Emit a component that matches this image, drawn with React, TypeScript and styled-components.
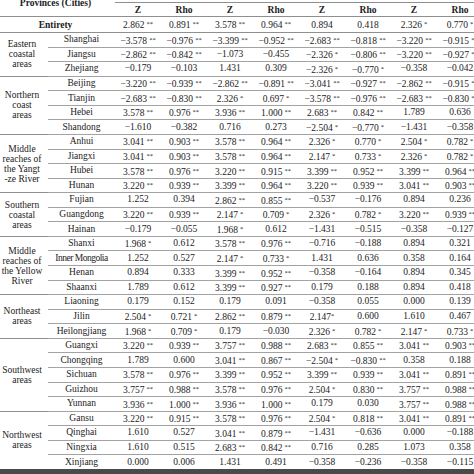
import React from "react";
import styled, { createGlobalStyle } from "styled-components";

const GlobalStyle = createGlobalStyle`
  html, body {
    margin: 0;
    padding: 0;
    background: #fff;
    overflow: hidden;
  }
  body {
    width: 474px;
    height: 474px;
  }
`;

const Page = styled.div`
  width: 474px;
  height: 474px;
  overflow: hidden;
  background: #fff;
`;

const Table = styled.table`
  border-collapse: collapse;
  table-layout: fixed;
  width: 487px;
  margin-left: -4px;
  margin-top: -11px;
  font-family: "Liberation Serif", "Times New Roman", serif;
  font-size: 9.5px;
  color: #222;
`;

const GroupHead = styled.th`
  height: 13px;
  padding: 0;
  border-bottom: 1px solid #8f8f8f;
`;

const CornerHead = styled.th`
  padding: 0;
  font-weight: 700;
  text-align: center;
  vertical-align: middle;
  border-bottom: 1px solid #8f8f8f;
`;

const ColHead = styled.th`
  height: 13px;
  padding: 0;
  font-weight: 700;
  text-align: center;
  border-bottom: 1px solid #8f8f8f;
`;

const Cell = styled.td<{ $last?: boolean }>`
  height: 13.57px;
  padding: 0;
  line-height: 11px;
  text-align: center;
  white-space: nowrap;
  border-bottom: ${(p) => (p.$last ? "6px solid #4a4a4a" : "1px solid #a3a3a3")};
`;

const TotalCell = styled.td<{ $label?: boolean }>`
  height: 15px;
  padding: 0;
  font-weight: ${(p) => (p.$label ? 700 : 400)};
  text-align: center;
  white-space: nowrap;
  border-bottom: 1px solid #8f8f8f;
`;

const Region = styled.td<{ $last?: boolean }>`
  padding: 0;
  line-height: 10px;
  text-align: center;
  vertical-align: middle;
  white-space: nowrap;
  border-bottom: ${(p) => (p.$last ? "6px solid #4a4a4a" : "1px solid #8f8f8f")};
`;

const Province = styled(Cell)<{ $condensed?: boolean }>`
  letter-spacing: ${(p) => (p.$condensed ? "-0.5px" : "0")};
`;

const Stars = styled.span<{ $tight?: boolean }>`
  font-size: 6.5px;
  vertical-align: 1.5px;
  margin-left: ${(p) => (p.$tight ? "0" : "2px")};
`;

type Group = { name: string[]; rows: [string, string[]][] };

const entirety = ["2.862 **", "0.891 **", "3.578 **", "0.964 **", "0.894", "0.418", "2.326 *", "0.770 *"];

const groups: Group[] = [
  {
    name: ["Eastern", "coastal", "areas"],
    rows: [
      ["Shanghai", ["−3.578 **", "−0.976 **", "−3.399 **", "−0.952 **", "−2.683 **", "−0.818 **", "−3.220 **", "−0.915 **"]],
      ["Jiangsu", ["−2.862 **", "−0.842 **", "−1.073", "−0.455", "−2.326 *", "−0.806 **", "−3.220 **", "−0.927 **"]],
      ["Zhejiang", ["−0.179", "−0.103", "1.431", "0.309", "−2.326 *", "−0.770 *", "−0.358", "−0.042"]],
    ],
  },
  {
    name: ["Northern", "coast", "areas"],
    rows: [
      ["Beijing", ["−3.220 **", "−0.939 **", "−2.862 **", "−0.891 **", "−3.041 **", "−0.927 **", "−2.862 **", "−0.915 **"]],
      ["Tianjin", ["−2.683 **", "−0.830 **", "2.326 *", "0.697 *", "−3.578 **", "−0.976 **", "−2.683 **", "−0.830 **"]],
      ["Hebei", ["3.578 **", "0.976 **", "3.936 **", "1.000 **", "2.683 **", "0.842 **", "1.789", "0.636"]],
      ["Shandong", ["−1.610", "−0.382", "0.716", "0.273", "−2.504 *", "−0.770 *", "−1.431", "−0.358"]],
    ],
  },
  {
    name: ["Middle", "reaches of", "the Yangt", "-ze River"],
    rows: [
      ["Anhui", ["3.041 **", "0.903 **", "3.578 **", "0.964 **", "2.326 *", "0.770 *", "2.504 *", "0.782 *"]],
      ["Jiangxi", ["3.041 **", "0.903 **", "3.578 **", "0.964 **", "2.147 *", "0.733 *", "2.326 *", "0.782 *"]],
      ["Hubei", ["3.578 **", "0.976 **", "3.220 **", "0.915 **", "3.399 **", "0.952 **", "3.399 **", "0.964 **"]],
      ["Hunan", ["3.220 **", "0.939 **", "3.399 **", "0.964 **", "3.220 **", "0.939 **", "3.041 **", "0.903 **"]],
    ],
  },
  {
    name: ["Southern", "coastal", "areas"],
    rows: [
      ["Fujian", ["1.252", "0.394", "2.862 **", "0.855 **", "−0.537", "−0.176", "0.894", "0.236"]],
      ["Guangdong", ["3.220 **", "0.939 **", "2.147 *", "0.709 *", "2.326 *", "0.782 *", "3.220 **", "0.939 **"]],
      ["Hainan", ["−0.179", "−0.055", "1.968 *", "0.612", "−1.431", "−0.515", "−0.358", "−0.127"]],
    ],
  },
  {
    name: ["Middle", "reaches of", "the Yellow", "River"],
    rows: [
      ["Shanxi", ["1.968 *", "0.612", "3.578 **", "0.976 **", "−0.716", "−0.188", "0.894", "0.321"]],
      ["Inner Mongolia", ["1.252", "0.527", "2.147 *", "0.733 *", "1.431", "0.636", "0.358", "0.164"]],
      ["Henan", ["0.894", "0.333", "3.399 **", "0.952 **", "−0.358", "−0.164", "0.894", "0.345"]],
      ["Shaanxi", ["1.789", "0.612", "3.399 **", "0.927 **", "0.179", "0.188", "0.894", "0.418"]],
    ],
  },
  {
    name: ["Northeast", "areas"],
    rows: [
      ["Liaoning", ["0.179", "0.152", "0.179", "0.091", "−0.358", "0.055", "0.000", "0.139"]],
      ["Jilin", ["2.504 *", "0.721 *", "2.862 **", "0.879 **", "2.147*", "0.600", "1.610", "0.467"]],
      ["Heilongjiang", ["1.968 *", "0.709 *", "0.179", "−0.030", "2.326 *", "0.782 *", "2.147 *", "0.733 *"]],
    ],
  },
  {
    name: ["Southwest", "areas"],
    rows: [
      ["Guangxi", ["3.220 **", "0.939 **", "3.757 **", "0.988 **", "2.683 **", "0.855 **", "3.041 **", "0.903 **"]],
      ["Chongqing", ["1.789", "0.600", "3.041 **", "0.867 **", "−2.504 *", "−0.830 **", "0.358", "0.188"]],
      ["Sichuan", ["3.578 **", "0.976 **", "3.399 **", "0.952 **", "3.399 **", "0.939 **", "3.041 **", "0.891 **"]],
      ["Guizhou", ["3.757 **", "0.988 **", "3.578 **", "0.976 **", "2.504 *", "0.830 **", "3.757 **", "0.988 **"]],
      ["Yunnan", ["3.936 **", "1.000 **", "3.936 **", "1.000 **", "0.179", "0.030", "3.757 **", "0.988 **"]],
    ],
  },
  {
    name: ["Northwest", "areas"],
    rows: [
      ["Gansu", ["3.220 **", "0.915 **", "3.578 **", "0.976 **", "2.504 *", "0.818 **", "3.041 **", "0.891 **"]],
      ["Qinghai", ["1.610", "0.527", "3.041 **", "0.879 **", "−1.431", "−0.636", "0.000", "−0.188"]],
      ["Ningxia", ["1.610", "0.515", "2.683 **", "0.842 **", "0.716", "0.285", "1.073", "0.358"]],
      ["Xinjiang", ["0.000", "0.006", "1.431", "0.491", "−0.358", "−0.236", "−0.358", "−0.115"]],
    ],
  },
];

function Value({ text }: { text: string }) {
  const m = text.match(/^([^\s*]+)(\s?)(\*+)?$/);
  if (!m) return <>{text}</>;
  return (
    <>
      {m[1]}
      {m[3] && <Stars $tight={m[2] === ""}>{m[3]}</Stars>}
    </>
  );
}

export default function App() {
  const heads = ["Z", "Rho", "Z", "Rho", "Z", "Rho", "Z", "Rho"];
  return (
    <Page>
      <GlobalStyle />
      <Table>
        <colgroup>
          <col style={{ width: 52 }} />
          <col style={{ width: 67 }} />
          {heads.map((_, i) => (
            <col key={i} style={{ width: 46 }} />
          ))}
        </colgroup>
        <thead>
          <tr>
            <CornerHead colSpan={2} rowSpan={2}>
              Provinces (Cities)
            </CornerHead>
            <GroupHead colSpan={2} />
            <GroupHead colSpan={2} />
            <GroupHead colSpan={2} />
            <GroupHead colSpan={2} />
          </tr>
          <tr>
            {heads.map((h, i) => (
              <ColHead key={i}>{h}</ColHead>
            ))}
          </tr>
        </thead>
        <tbody>
          <tr>
            <TotalCell colSpan={2} $label>
              Entirety
            </TotalCell>
            {entirety.map((v, i) => (
              <TotalCell key={i}>
                <Value text={v} />
              </TotalCell>
            ))}
          </tr>
          {groups.map((g, gi) =>
            g.rows.map(([prov, vals], ri) => {
              const last = gi === groups.length - 1 && ri === g.rows.length - 1;
              return (
                <tr key={prov}>
                  {ri === 0 && (
                    <Region rowSpan={g.rows.length} $last={gi === groups.length - 1}>
                      {g.name.map((line, li) => (
                        <React.Fragment key={li}>
                          {li > 0 && <br />}
                          {line}
                        </React.Fragment>
                      ))}
                    </Region>
                  )}
                  <Province $last={last} $condensed={prov === "Inner Mongolia"}>
                    {prov}
                  </Province>
                  {vals.map((v, vi) => (
                    <Cell key={vi} $last={last}>
                      <Value text={v} />
                    </Cell>
                  ))}
                </tr>
              );
            })
          )}
        </tbody>
      </Table>
    </Page>
  );
}
